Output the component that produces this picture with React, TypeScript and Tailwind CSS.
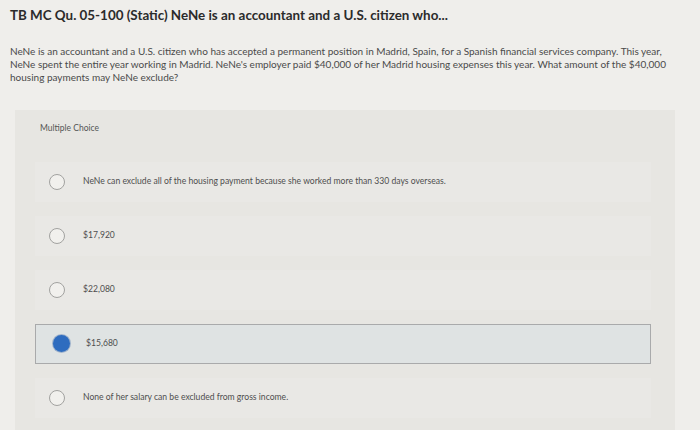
import React from 'react';

type Choice = { label: string; selected?: boolean };

const choices: Choice[] = [
  { label: 'NeNe can exclude all of the housing payment because she worked more than 330 days overseas.' },
  { label: '$17,920' },
  { label: '$22,080' },
  { label: '$15,680', selected: true },
  { label: 'None of her salary can be excluded from gross income.' },
];

const Radio = ({ on }: { on?: boolean }) =>
  on ? (
    <span className="block w-[17px] h-[17px] rounded-full bg-[#2e6cbf] ring-1 ring-[#9fb3cc]" />
  ) : (
    <span className="block w-[16px] h-[16px] rounded-full border border-[#a2a2a0] bg-[#f1f0ed]" />
  );

export default function App() {
  return (
    <div
      className="w-[700px] h-[430px] overflow-hidden bg-[#efeeeb] text-[#3a3a3a]"
      style={{ fontFamily: 'Lato, "Open Sans", Arial, sans-serif' }}
    >
      <div className="pl-[10px] pt-[6px]">
        <h1 className="text-[13.4px] font-bold text-[#2b2b2b] leading-[18px]">
          TB MC Qu. 05-100 (Static) NeNe is an accountant and a U.S. citizen who...
        </h1>
        <p className="mt-[21px] whitespace-nowrap text-[10px] leading-[13px] text-[#4a4a4a]">
          NeNe is an accountant and a U.S. citizen who has accepted a permanent position in Madrid, Spain, for a Spanish financial services company. This year,
          <br />
          NeNe spent the entire year working in Madrid. NeNe's employer paid $40,000 of her Madrid housing expenses this year. What amount of the $40,000
          <br />
          housing payments may NeNe exclude?
        </p>
      </div>

      <div className="ml-[15px] mt-[26px] w-[660px] h-[320px] bg-[#e7e6e2] pt-[12px]">
        <div className="pl-[25px] text-[8.5px] text-[#555]">Multiple Choice</div>
        <div className="mt-[27px] flex flex-col gap-[14px] pl-[20px] pr-[24px]">
          {choices.map((c, i) => (
            <div
              key={i}
              className={
                c.selected
                  ? 'h-[40px] flex items-center gap-[16px] pl-[17px] border border-[#a9aaab] bg-[#dfe3e3]'
                  : 'h-[40px] flex items-center gap-[18px] pl-[14px] bg-[#e9e8e5]'
              }
            >
              <Radio on={c.selected} />
              <span className="text-[8.6px] text-[#4e4e4e]">{c.label}</span>
            </div>
          ))}
        </div>
      </div>
    </div>
  );
}
